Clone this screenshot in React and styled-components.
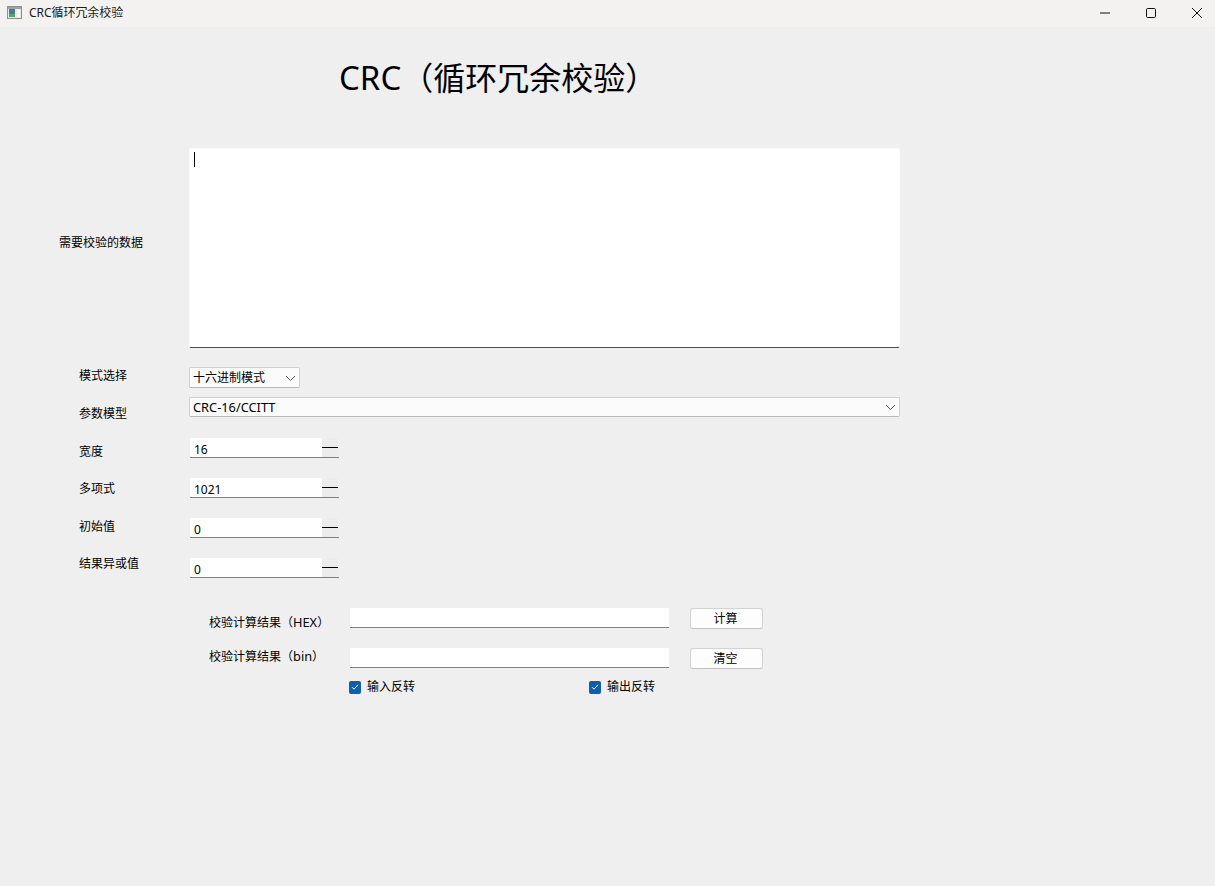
import React from "react";
import styled, { createGlobalStyle } from "styled-components";

const Global = createGlobalStyle`
  html, body { margin: 0; padding: 0; background: #efefef; }
  body { font-family: "Noto Sans", "Noto Sans CJK SC", sans-serif; font-size: 12px; color: #000; }
  * { box-sizing: border-box; }
`;
const font = `"Noto Sans", "Noto Sans CJK SC", sans-serif`;

const Window = styled.div`
  width: 1215px; height: 886px; background: #efefef; overflow: hidden;
  display: flex; flex-direction: column;
`;
const TitleBar = styled.div`
  height: 27px; flex: none; background: #f3f2f0; display: flex; align-items: center;
  padding: 0 0 2px 7px;
`;
const AppIcon = styled.svg`width: 15px; height: 13px; flex: none;`;
const TitleText = styled.span`
  margin-left: 7px; font-size: 12px; line-height: 16px; color: #1a1a1a; flex: 1; letter-spacing: -0.05px;
`;
const WinButtons = styled.div`display: flex; margin-right: -5px;`;
const WinButton = styled.div`
  width: 46px; height: 22px; display: flex; align-items: center; justify-content: center;
  svg { width: 12px; height: 12px; }
`;
const Heading = styled.h1`
  margin: 0; padding: 27px 0 0 339px; height: 121px; font: 400 32px/48px ${font}; color: #000;
`;
const HeadingLatin = styled.span`font-size: 33px;`;
const DataRow = styled.div`display: flex; height: 200px;`;
const DataLabel = styled.div`
  width: 189px; padding: 87px 0 0 59px; font-size: 12px; line-height: 16px; flex: none;
`;
const TextArea = styled.div`
  width: 711px; height: 200px; background: #fff; border: 1px solid #fbfbfb; border-bottom: 1px solid #0a5aa8;
  border-radius: 2px; padding: 3px 0 0 4px;
`;
const Caret = styled.div`width: 1px; height: 15px; background: #000;`;
const Row = styled.div`
  display: flex; height: 20px; margin-top: ${p => p.$top}px; flex: none;
`;
const Label = styled.div`
  width: ${p => p.$w || 110}px; margin-left: ${p => p.$left || 79}px; flex: none;
  margin-top: ${p => p.$nudge || 0}px; font-size: 12px; line-height: 16px; white-space: nowrap;
`;
const Latin = styled.span`font-size: ${p => p.$size || 12.8}px;`;
const Select = styled.div`
  width: ${p => p.$w}px; height: ${p => p.$h || 20}px; margin-top: ${p => p.$lift || 0}px;
  background: #fbfbfb; border: 1px solid #d0d0d0; border-bottom-color: #b8b8b8;
  border-radius: 2px; display: flex; align-items: center; justify-content: space-between;
  padding: 0 2px 0 3px; font-size: 12px; line-height: 16px;
  svg { width: 11px; height: 7px; flex: none; margin: 1px 1px 0 0; }
`;
const Spin = styled.div`
  width: 149px; margin-left: 1px; height: 20px; display: flex; border-bottom: 1px solid #808080;
`;
const SpinValue = styled.div`
  width: 133px; background: #fff; padding: 4px 0 0 ${p => p.$pad || 4}px; font-size: 12px; line-height: 16px;
`;
const SpinSide = styled.div`
  width: 16px; background: #ececec; display: flex; align-items: center; margin-left: -1px;
`;
const SpinLine = styled.div`width: 17px; height: 1px; background: #000;`;
const ResultInput = styled.div`
  width: 319px; height: 20px; background: #fff; border-bottom: 1px solid #808080;
  margin-left: 1px; flex: none;
`;
const Action = styled.button`
  width: 73px; height: 21px; margin-left: 21px; padding: 1px 2px 0 0; flex: none;
  background: #fdfdfd; border: 1px solid #d2d2d2; border-bottom-color: #c0c0c0; border-radius: 3px;
  font: 400 12px/16px ${font}; color: #000;
`;
const CheckRow = styled.div`display: flex; height: 14px; margin: 12px 0 0 349px;`;
const Check = styled.div`
  width: ${p => p.$w}px; display: flex; align-items: center; font-size: 12px; line-height: 14px; flex: none;
`;
const Box = styled.div`
  width: 12px; height: 13px; border-radius: 2px; background: #0a5fb0; margin-right: 6px;
  display: flex; align-items: center; justify-content: center;
  svg { width: 8px; height: 8px; }
`;

const Chevron = () => (
  <svg viewBox="0 0 11 7"><path d="M1 1l4.5 4.5L10 1" fill="none" stroke="#555" strokeWidth="1" /></svg>
);
const Tick = () => (
  <svg viewBox="0 0 8 8"><path d="M1 4.2l2 2L7 1.8" fill="none" stroke="#fff" strokeWidth="1" /></svg>
);
const SpinField = ({ value, pad }) => (
  <Spin>
    <SpinValue $pad={pad}>{value}</SpinValue>
    <SpinSide><SpinLine /></SpinSide>
  </Spin>
);

export default function App() {
  return (
    <Window>
      <Global />
      <TitleBar>
        <AppIcon viewBox="0 0 15 13">
          <rect x="0.5" y="0.5" width="14" height="12" fill="#e8e8e8" stroke="#8f8f8f" />
          <rect x="1" y="1" width="13" height="2" fill="#9aa3ad" />
          <rect x="2" y="3" width="6" height="8" fill="#3f7f8f" />
          <rect x="2" y="8" width="6" height="3" fill="#5aa070" />
          <rect x="10" y="4" width="3" height="7" fill="#f8f8f8" />
        </AppIcon>
        <TitleText>CRC循环冗余校验</TitleText>
        <WinButtons>
          <WinButton><svg viewBox="0 0 12 12"><path d="M1 6h10" stroke="#111" strokeWidth="1" /></svg></WinButton>
          <WinButton><svg viewBox="0 0 12 12"><rect x="1.5" y="1.5" width="9" height="9" rx="1.2" fill="none" stroke="#111" /></svg></WinButton>
          <WinButton><svg viewBox="0 0 12 12"><path d="M1 1l10 10M11 1L1 11" stroke="#111" strokeWidth="1" /></svg></WinButton>
        </WinButtons>
      </TitleBar>
      <Heading><HeadingLatin>CRC</HeadingLatin>（循环冗余校验）</Heading>
      <DataRow>
        <DataLabel>需要校验的数据</DataLabel>
        <TextArea><Caret /></TextArea>
      </DataRow>
      <Row $top={20}>
        <Label $nudge={0}>模式选择</Label>
        <Select $w={111} $h={21} $lift={-1}>十六进制模式<Chevron /></Select>
      </Row>
      <Row $top={10}>
        <Label $nudge={8}>参数模型</Label>
        <Select $w={711} $lift={-1}><Latin>CRC-16/CCITT</Latin><Chevron /></Select>
      </Row>
      <Row $top={20}>
        <Label $nudge={6}>宽度</Label>
        <SpinField value="16" />
      </Row>
      <Row $top={20}>
        <Label $nudge={3}>多项式</Label>
        <SpinField value="1021" />
      </Row>
      <Row $top={20}>
        <Label $nudge={1}>初始值</Label>
        <SpinField value="0" />
      </Row>
      <Row $top={20}>
        <Label $nudge={-2}>结果异或值</Label>
        <SpinField value="0" />
      </Row>
      <Row $top={30}>
        <Label $left={209} $w={140} $nudge={6}>校验计算结果（<Latin>HEX</Latin>）</Label>
        <ResultInput />
        <Action>计算</Action>
      </Row>
      <Row $top={20}>
        <Label $left={209} $w={140} $nudge={0}>校验计算结果（<Latin>bin</Latin>）</Label>
        <ResultInput />
        <Action>清空</Action>
      </Row>
      <CheckRow>
        <Check $w={240}><Box><Tick /></Box>输入反转</Check>
        <Check $w={100}><Box><Tick /></Box>输出反转</Check>
      </CheckRow>
    </Window>
  );
}
